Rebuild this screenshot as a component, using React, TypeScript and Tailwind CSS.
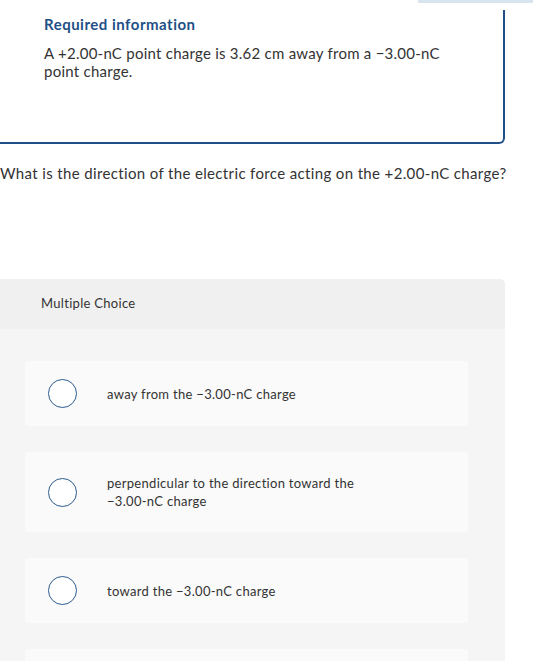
import React from "react";

const options = [
  { text: "away from the \u22123.00-nC charge", h: "h-[65px]" },
  { text: "perpendicular to the direction toward the\n\u22123.00-nC charge", h: "h-[80px]" },
  { text: "toward the \u22123.00-nC charge", h: "h-[65px]" },
  { text: "", h: "h-[65px]" },
];

const info = "A +2.00-nC point charge is 3.62 cm away from a \u22123.00-nC point charge.";

export default function App() {
  return (
    <div className="relative w-[533px] h-[661px] overflow-hidden bg-white text-[#333]" style={{ fontFamily: "Lato, 'Liberation Sans', sans-serif" }}>
      <div className="absolute right-0 top-0 w-[115px] h-[3px] bg-[#d9e4ef]" />
      <div className="w-[505px]">
        <div className="ml-[-8px] mt-[10px] w-[513px] h-[134px] border-r-2 border-b-2 border-l-2 border-[#1f4f86] rounded-b-[6px] pl-[50px] pr-4">
          <div className="text-[15px] font-bold text-[#1f4f86] leading-[18px] pt-[5px] tracking-[0.5px]">Required information</div>
          <p className="text-[15px] leading-[18px] mt-[11px] text-[#333] w-[410px] tracking-[0.25px]">{info}</p>
        </div>
        <div className="mt-[20px] text-[15px] leading-[18px] text-[#333] whitespace-nowrap tracking-[0.36px]">
          What is the direction of the electric force acting on the +2.00-nC charge?
        </div>
        <div className="mt-[97px] rounded-tr-[5px] overflow-hidden">
          <div className="h-[50px] bg-[#f0f0f0] flex items-center pl-[41px] text-[13px] text-[#333] tracking-[0.3px]">Multiple Choice</div>
          <div className="bg-[#f5f5f5] pt-[32px] pb-[20px] flex flex-col gap-[26px]">
            {options.map((o, i) => (
              <div key={i} className={`ml-[25px] mr-[37px] ${o.h} bg-[#fafafa] rounded-[4px] flex items-center`}>
                {o.text && (
                  <>
                    <div className="ml-[23px] w-[29px] h-[29px] rounded-full border-[1.5px] border-[#2c5b8c] bg-white shrink-0" />
                    <div className="ml-[30px] text-[13px] leading-[18px] text-[#333] whitespace-pre-line tracking-[0.3px]">{o.text}</div>
                  </>
                )}
              </div>
            ))}
          </div>
        </div>
      </div>
    </div>
  );
}
